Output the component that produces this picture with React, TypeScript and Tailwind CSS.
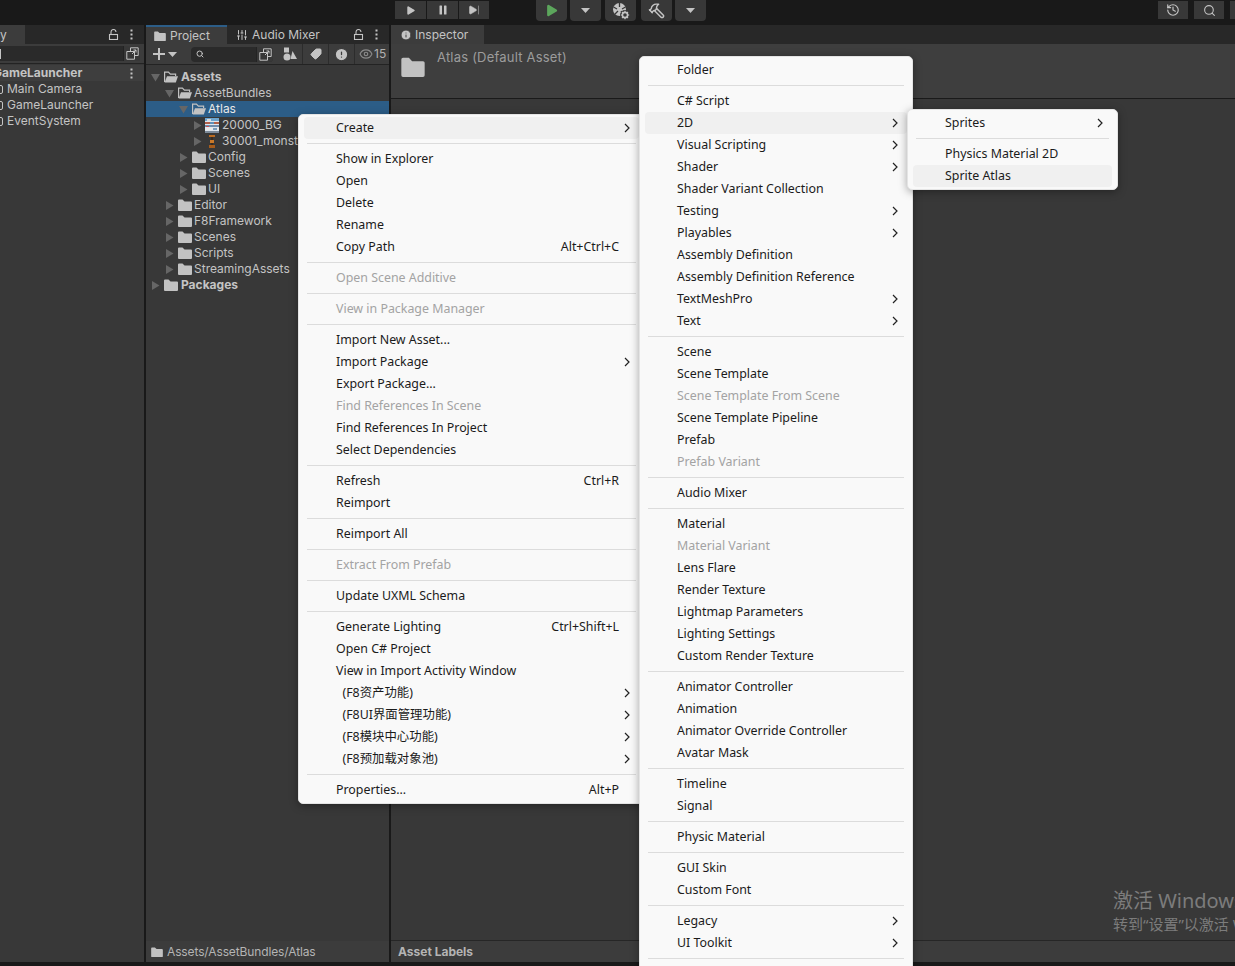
import { History, Search, SlidersVertical, Play, Pause, SkipForward, Hammer, Info, Tag, Eye } from "lucide-react";

type MenuRow = { t: string; key?: string; sub?: boolean; off?: boolean; hl?: boolean } | "sep";

const mainMenu: MenuRow[] = [
  { t: "Create", sub: true, hl: true },
  "sep",
  { t: "Show in Explorer" },
  { t: "Open" },
  { t: "Delete" },
  { t: "Rename" },
  { t: "Copy Path", key: "Alt+Ctrl+C" },
  "sep",
  { t: "Open Scene Additive", off: true },
  "sep",
  { t: "View in Package Manager", off: true },
  "sep",
  { t: "Import New Asset..." },
  { t: "Import Package", sub: true },
  { t: "Export Package..." },
  { t: "Find References In Scene", off: true },
  { t: "Find References In Project" },
  { t: "Select Dependencies" },
  "sep",
  { t: "Refresh", key: "Ctrl+R" },
  { t: "Reimport" },
  "sep",
  { t: "Reimport All" },
  "sep",
  { t: "Extract From Prefab", off: true },
  "sep",
  { t: "Update UXML Schema" },
  "sep",
  { t: "Generate Lighting", key: "Ctrl+Shift+L" },
  { t: "Open C# Project" },
  { t: "View in Import Activity Window" },
  { t: "  (F8资产功能)", sub: true },
  { t: "  (F8UI界面管理功能)", sub: true },
  { t: "  (F8模块中心功能)", sub: true },
  { t: "  (F8预加载对象池)", sub: true },
  "sep",
  { t: "Properties...", key: "Alt+P" },
];

const createMenu: MenuRow[] = [
  { t: "Folder" },
  "sep",
  { t: "C# Script" },
  { t: "2D", sub: true, hl: true },
  { t: "Visual Scripting", sub: true },
  { t: "Shader", sub: true },
  { t: "Shader Variant Collection" },
  { t: "Testing", sub: true },
  { t: "Playables", sub: true },
  { t: "Assembly Definition" },
  { t: "Assembly Definition Reference" },
  { t: "TextMeshPro", sub: true },
  { t: "Text", sub: true },
  "sep",
  { t: "Scene" },
  { t: "Scene Template" },
  { t: "Scene Template From Scene", off: true },
  { t: "Scene Template Pipeline" },
  { t: "Prefab" },
  { t: "Prefab Variant", off: true },
  "sep",
  { t: "Audio Mixer" },
  "sep",
  { t: "Material" },
  { t: "Material Variant", off: true },
  { t: "Lens Flare" },
  { t: "Render Texture" },
  { t: "Lightmap Parameters" },
  { t: "Lighting Settings" },
  { t: "Custom Render Texture" },
  "sep",
  { t: "Animator Controller" },
  { t: "Animation" },
  { t: "Animator Override Controller" },
  { t: "Avatar Mask" },
  "sep",
  { t: "Timeline" },
  { t: "Signal" },
  "sep",
  { t: "Physic Material" },
  "sep",
  { t: "GUI Skin" },
  { t: "Custom Font" },
  "sep",
  { t: "Legacy", sub: true },
  { t: "UI Toolkit", sub: true },
  "sep",
];

const spriteMenu: MenuRow[] = [
  { t: "Sprites", sub: true },
  "sep",
  { t: "Physics Material 2D" },
  { t: "Sprite Atlas", hl: true },
];

type TreeRow = {
  name: string;
  depth: number;
  open?: boolean;
  bold?: boolean;
  selected?: boolean;
  thumb?: "bg" | "monster";
};

const tree: TreeRow[] = [
  { name: "Assets", depth: 0, open: true, bold: true },
  { name: "AssetBundles", depth: 1, open: true },
  { name: "Atlas", depth: 2, open: true, selected: true },
  { name: "20000_BG", depth: 3, thumb: "bg" },
  { name: "30001_monster", depth: 3, thumb: "monster" },
  { name: "Config", depth: 2 },
  { name: "Scenes", depth: 2 },
  { name: "UI", depth: 2 },
  { name: "Editor", depth: 1 },
  { name: "F8Framework", depth: 1 },
  { name: "Scenes", depth: 1 },
  { name: "Scripts", depth: 1 },
  { name: "StreamingAssets", depth: 1 },
  { name: "Packages", depth: 0, bold: true },
];

function Chevron() {
  return (
    <svg width="8" height="10" viewBox="0 0 8 10" className="mr-[8px] shrink-0">
      <path d="M2 1l4 4-4 4" fill="none" stroke="#222" strokeWidth="1.2" />
    </svg>
  );
}

function Menu({ rows, className }: { rows: MenuRow[]; className: string }) {
  return (
    <div
      className={`absolute z-10 rounded-[5px] border border-[#e4e4e4] bg-[#f9f9f9] pt-[2px] shadow-[0_2px_8px_rgba(0,0,0,0.35)] ${className}`}
      style={{ fontFamily: '"Noto Sans", "Noto Sans CJK SC", sans-serif' }}
    >
      {rows.map((row, i) =>
        row === "sep" ? (
          <div key={i} className="flex h-[9px] items-center px-[8px]">
            <div className="h-px w-full bg-[#dcdcdc]" />
          </div>
        ) : (
          <div
            key={i}
            className={`mx-[5px] flex h-[22px] items-center justify-between rounded-[4px] pl-[32px] text-[12.4px] ${
              row.hl ? "bg-[#f0f0f0]" : ""
            } ${row.off ? "text-[#a3a3a3]" : "text-[#1b1b1b]"}`}
          >
            <span className="whitespace-pre">{row.t}</span>
            {row.key && <span className="mr-[20px]">{row.key}</span>}
            {row.sub && <Chevron />}
          </div>
        ),
      )}
    </div>
  );
}

function OpenLock() {
  return (
    <svg width="11" height="11" viewBox="0 0 11 11" className="shrink-0">
      <path d="M3 5V3a2.5 2.5 0 0 1 5 0" fill="none" stroke="#c4c4c4" strokeWidth="1.1" />
      <rect x="1.5" y="5.5" width="8" height="5" fill="none" stroke="#c4c4c4" strokeWidth="1.1" />
    </svg>
  );
}

function Dots() {
  return (
    <svg width="3" height="11" viewBox="0 0 3 11" className="shrink-0">
      <rect x="0.5" y="0.5" width="2" height="2" fill="#c4c4c4" />
      <rect x="0.5" y="4.5" width="2" height="2" fill="#c4c4c4" />
      <rect x="0.5" y="8.5" width="2" height="2" fill="#c4c4c4" />
    </svg>
  );
}

function ClosedFolder({ className = "" }: { className?: string }) {
  return (
    <svg viewBox="0 0 14 12" className={className}>
      <path d="M0 1.5Q0 .5 1 .5h3.5L6.5 2.5H13q1 0 1 1V11q0 1-1 1H1q-1 0-1-1z" fill="#c2c2c2" />
    </svg>
  );
}

function OpenFolder() {
  return (
    <svg viewBox="0 0 14 12" className="h-[12px] w-[14px]">
      <path d="M.6 11V1.2h3.8l2 2h5.2V5" fill="none" stroke="#c2c2c2" strokeWidth="1.2" />
      <path d="M3 5.2h11l-2.2 6.3H.6z" fill="#c2c2c2" />
    </svg>
  );
}

function Arrow({ open }: { open?: boolean }) {
  return (
    <svg width="9" height="9" viewBox="0 0 9 9" className="shrink-0">
      {open ? <path d="M0 1h9L4.5 8.5z" fill="#666" /> : <path d="M1 0v9l7.5-4.5z" fill="#666" />}
    </svg>
  );
}

function BgThumb() {
  return (
    <svg width="14" height="15" viewBox="0 0 14 15" className="mr-px shrink-0">
      <rect width="14" height="15" fill="#dfe6ee" />
      <rect y="0" width="14" height="3" fill="#6da5cf" />
      <rect x="2" y="1" width="4" height="2" fill="#d9d9d9" />
      <rect y="4" width="14" height="2" fill="#b0604a" />
      <rect x="5" y="4" width="4" height="2" fill="#5f8fb8" />
      <rect y="7" width="14" height="2" fill="#6f8cab" />
      <rect x="1" y="8" width="3" height="1" fill="#c94e4e" />
      <rect y="10" width="14" height="2" fill="#e8e8e8" />
      <rect x="8" y="10" width="4" height="2" fill="#7a9cbc" />
      <rect y="13" width="14" height="2" fill="#7c8a99" />
    </svg>
  );
}

function MonsterThumb() {
  return (
    <svg width="14" height="15" viewBox="0 0 14 15" className="mr-px shrink-0">
      <rect x="4" y="1" width="6" height="2" fill="#b86a22" />
      <rect x="6" y="3" width="2" height="3" fill="#3a2a1c" />
      <rect x="5" y="6" width="4" height="3" fill="#c9792a" />
      <rect x="6" y="9" width="2" height="2" fill="#3a2a1c" />
      <rect x="4" y="11" width="6" height="3" fill="#a65c1c" />
    </svg>
  );
}

function TreeLine({ row }: { row: TreeRow }) {
  return (
    <div
      className={`flex h-[16px] items-center whitespace-nowrap ${row.selected ? "bg-[#2c5d87] text-[#e8e8e8]" : ""}`}
      style={{ paddingLeft: 5 + row.depth * 14 }}
    >
      <Arrow open={row.open} />
      <span className="flex w-[18px] shrink-0 justify-end">
        {row.thumb === "bg" ? (
          <BgThumb />
        ) : row.thumb === "monster" ? (
          <MonsterThumb />
        ) : row.open ? (
          <OpenFolder />
        ) : (
          <ClosedFolder className="h-[12px] w-[14px]" />
        )}
      </span>
      <span className={row.bold ? "ml-[3px] font-bold" : "ml-[2px]"}>{row.name}</span>
    </div>
  );
}

function ToolBtn({ className, children }: { className: string; children?: React.ReactNode }) {
  return <div className={`flex shrink-0 items-center justify-center bg-[#383838] ${className}`}>{children}</div>;
}

function Caret() {
  return (
    <svg width="9" height="5" viewBox="0 0 9 5">
      <path d="M0 0h9L4.5 5z" fill="#c4c4c4" />
    </svg>
  );
}

function BoxSearchBtn() {
  return (
    <svg width="13" height="13" viewBox="0 0 13 13">
      <path d="M4.5 4.5V.8h7.7v7.7H8.5M.8 4.5h7.7v7.7H.8zM6 7l4-4M7.5 3H10v2.5" fill="none" stroke="#c4c4c4" strokeWidth="1" />
    </svg>
  );
}

function ServicesIcon() {
  return (
    <svg width="18" height="18" viewBox="0 0 18 18">
      <circle cx="7.5" cy="7.5" r="6.5" fill="#c4c4c4" />
      <path d="M7.5 1v4M1.5 5l3.5 2M13.5 5L10 7M3 12l3-3M11 12L9 9" stroke="#383838" strokeWidth="1.3" />
      <circle cx="13" cy="13" r="5" fill="#383838" />
      <circle cx="13" cy="13" r="2.6" fill="none" stroke="#c4c4c4" strokeWidth="1.6" />
      <path d="M13 8.8v1.6M13 15.6v1.6M8.8 13h1.6M15.6 13h1.6M10 10l1.1 1.1M14.9 14.9L16 16M16 10l-1.1 1.1M11.1 14.9L10 16" stroke="#c4c4c4" strokeWidth="1.2" />
    </svg>
  );
}

export default function App() {
  return (
    <div
      className="relative flex h-[966px] w-[1235px] flex-col overflow-hidden bg-[#191919] text-[12px] text-[#c4c4c4]"
      style={{ fontFamily: 'Inter, "Noto Sans CJK SC", sans-serif' }}
    >
      {/* Top toolbar */}
      <div className="flex h-[25px] shrink-0 items-start pt-px">
        <div className="ml-[395px] flex shrink-0 gap-px">
          <ToolBtn className="h-[18px] w-[31px]">
            <Play size={11} fill="#c4c4c4" strokeWidth={0} />
          </ToolBtn>
          <ToolBtn className="h-[18px] w-[31px]">
            <Pause size={12} fill="#c4c4c4" strokeWidth={0} />
          </ToolBtn>
          <ToolBtn className="h-[18px] w-[30px]">
            <SkipForward size={12} fill="#c4c4c4" strokeWidth={1} />
          </ToolBtn>
        </div>
        <div className="-mt-px ml-[47px] flex shrink-0">
          <ToolBtn className="h-[21px] w-[31px] rounded-b-[4px]">
            <Play size={15} fill="#5ca65c" color="#5ca65c" strokeWidth={0} />
          </ToolBtn>
          <ToolBtn className="ml-[3px] h-[21px] w-[31px] rounded-b-[4px]">
            <Caret />
          </ToolBtn>
          <ToolBtn className="ml-[4px] h-[21px] w-[31px] rounded-b-[4px]">
            <ServicesIcon />
          </ToolBtn>
          <ToolBtn className="ml-[5px] h-[21px] w-[31px] rounded-b-[4px]">
            <Hammer size={17} color="#c4c4c4" className="-scale-x-100" />
          </ToolBtn>
          <ToolBtn className="ml-[3px] h-[21px] w-[31px] rounded-b-[4px]">
            <Caret />
          </ToolBtn>
        </div>
        <ToolBtn className="ml-[452px] h-[18px] w-[30px]">
          <History size={14} color="#c4c4c4" />
        </ToolBtn>
        <ToolBtn className="ml-[6px] h-[18px] w-[30px]">
          <Search size={13} color="#c4c4c4" />
        </ToolBtn>
        <ToolBtn className="ml-[6px] h-[18px] w-[30px]" />
      </div>

      {/* Panels */}
      <div className="flex h-[937px] shrink-0 gap-[2px]">
        {/* Hierarchy */}
        <div className="flex w-[144px] shrink-0 flex-col overflow-hidden bg-[#383838]">
          <div className="flex h-[19px] items-center bg-[#282828]">
            <div className="flex h-full w-[25px] items-center bg-[#3c3c3c] pl-0">y</div>
            <div className="ml-auto mr-[11px] flex items-center gap-[11px]">
              <OpenLock />
              <Dots />
            </div>
          </div>
          <div className="flex h-[20px] items-center border-b border-[#232323] bg-[#3c3c3c] pr-[4px]">
            <div className="flex h-[15px] w-full items-center justify-end rounded-r-[3px] bg-[#2a2a2a]">
              <span className="mr-auto h-[10px] w-px bg-[#c4c4c4]" />
              <span className="flex h-full w-[17px] items-center justify-center border-l border-[#232323] bg-[#383838]">
                <BoxSearchBtn />
              </span>
            </div>
          </div>
          <div className="mt-px flex h-[16px] items-center bg-[#3e3e3e] pr-[11px] font-bold">
            <span className="-ml-[7px] whitespace-nowrap">GameLauncher</span>
            <span className="ml-auto">
              <Dots />
            </span>
          </div>
          {["Main Camera", "GameLauncher", "EventSystem"].map((name) => (
            <div key={name} className="flex h-[16px] items-center whitespace-nowrap">
              <span className="-ml-[3px] mr-[4px] h-[9px] w-[6px] rounded-[2px] border border-[#c4c4c4]" />
              {name}
            </div>
          ))}
        </div>

        {/* Project */}
        <div className="flex w-[243px] shrink-0 flex-col overflow-hidden bg-[#383838]">
          <div className="flex h-[19px] items-center bg-[#282828]">
            <div className="flex h-full w-[81px] items-center border-t-2 border-[#2c5d87] bg-[#3c3c3c] pl-[8px]">
              <ClosedFolder className="h-[10px] w-[12px]" />
              <span className="ml-[4px]">Project</span>
            </div>
            <SlidersVertical size={12} className="ml-[9px]" />
            <span className="ml-[4px]">Audio Mixer</span>
            <div className="ml-auto mr-[11px] flex items-center gap-[11px]">
              <OpenLock />
              <Dots />
            </div>
          </div>
          <div className="flex h-[21px] items-center border-b border-[#232323] bg-[#3c3c3c]">
            <svg width="12" height="12" viewBox="0 0 12 12" className="ml-[7px] shrink-0">
              <path d="M6 0v12M0 6h12" stroke="#c4c4c4" strokeWidth="2" />
            </svg>
            <span className="ml-[3px]">
              <Caret />
            </span>
            <div className="ml-[14px] flex h-[15px] w-[82px] shrink-0 items-center rounded-[4px] bg-[#2a2a2a]">
              <Search size={8} className="ml-[5px]" strokeWidth={3} />
              <span className="ml-auto flex h-full w-[17px] items-center justify-center rounded-r-[4px] border-l border-[#232323] bg-[#383838]">
                <BoxSearchBtn />
              </span>
            </div>
            <div className="ml-[4px] flex h-full w-[25px] shrink-0 items-center justify-center">
              <svg width="14" height="14" viewBox="0 0 14 14">
                <circle cx="4" cy="10" r="3.5" fill="#c4c4c4" />
                <rect x="1" y="0.5" width="5" height="5" fill="#c4c4c4" />
                <path d="M9.5 4L14 12H7.5z" fill="#c4c4c4" />
              </svg>
            </div>
            <div className="flex h-full w-[26px] shrink-0 items-center justify-center border-l border-[#2c2c2c]">
              <Tag size={12} fill="#c4c4c4" color="#c4c4c4" className="rotate-90" />
            </div>
            <div className="flex h-full w-[26px] shrink-0 items-center justify-center border-l border-[#2c2c2c]">
              <Info size={15} fill="#c4c4c4" color="#3c3c3c" className="rotate-180" />
            </div>
            <div className="flex h-full shrink-0 items-center whitespace-nowrap border-l border-[#2c2c2c] pl-[4px] text-[#8a8a8a]">
              <Eye size={14} className="mr-[1px]" />
              <span className="text-[#b0b0b0]">15</span>
            </div>
          </div>
          <div className="flex-1 pt-[4px]">
            {tree.map((row) => (
              <TreeLine key={`${row.name}${row.depth}`} row={row} />
            ))}
          </div>
          <div className="flex h-[21px] items-center bg-[#3c3c3c] pl-[5px] text-[#b4b4b4]">
            <ClosedFolder className="h-[10px] w-[12px]" />
            <span className="ml-[4px] tracking-[-0.12px]">Assets/AssetBundles/Atlas</span>
          </div>
        </div>

        {/* Inspector */}
        <div className="flex flex-1 flex-col bg-[#383838]">
          <div className="flex h-[19px] items-center bg-[#282828]">
            <div className="flex h-full w-[93px] items-center bg-[#3c3c3c] pl-[9px]">
              <Info size={12} fill="#c4c4c4" color="#3c3c3c" />
              <span className="ml-[3px]">Inspector</span>
            </div>
          </div>
          <div className="flex h-[55px] items-start border-b border-[#1a1a1a] bg-[#3e3e3e] pl-[10px]">
            <ClosedFolder className="mt-[13px] h-[20px] w-[24px]" />
            <span className="ml-[12px] mt-[4px] text-[13px] tracking-[0.2px] text-[#9c9c9c]">Atlas (Default Asset)</span>
          </div>
          <div className="flex-1" />
          <div className="flex h-[22px] items-center border-t border-[#262626] bg-[#3c3c3c] pl-[7px] font-bold text-[#b4b4b4]">
            Asset Labels
          </div>
        </div>
      </div>

      <Menu rows={mainMenu} className="left-[298px] top-[114px] w-[347px] pb-[2px]" />
      <Menu rows={createMenu} className="left-[639px] top-[56px] w-[274px] pb-[40px]" />
      <Menu rows={spriteMenu} className="left-[907px] top-[109px] w-[211px] pb-[2px]" />

      {/* Activation watermark */}
      <div
        className="absolute left-[1113px] top-[887px] w-[200px] whitespace-nowrap text-[#7c7c7c]"
        style={{ fontFamily: '"Noto Sans", "Noto Sans CJK SC", sans-serif' }}
      >
        <div className="text-[20px] leading-[27px]">激活 Windows</div>
        <div className="text-[15px] leading-[20px]">转到“设置”以激活 Windows。</div>
      </div>
    </div>
  );
}
